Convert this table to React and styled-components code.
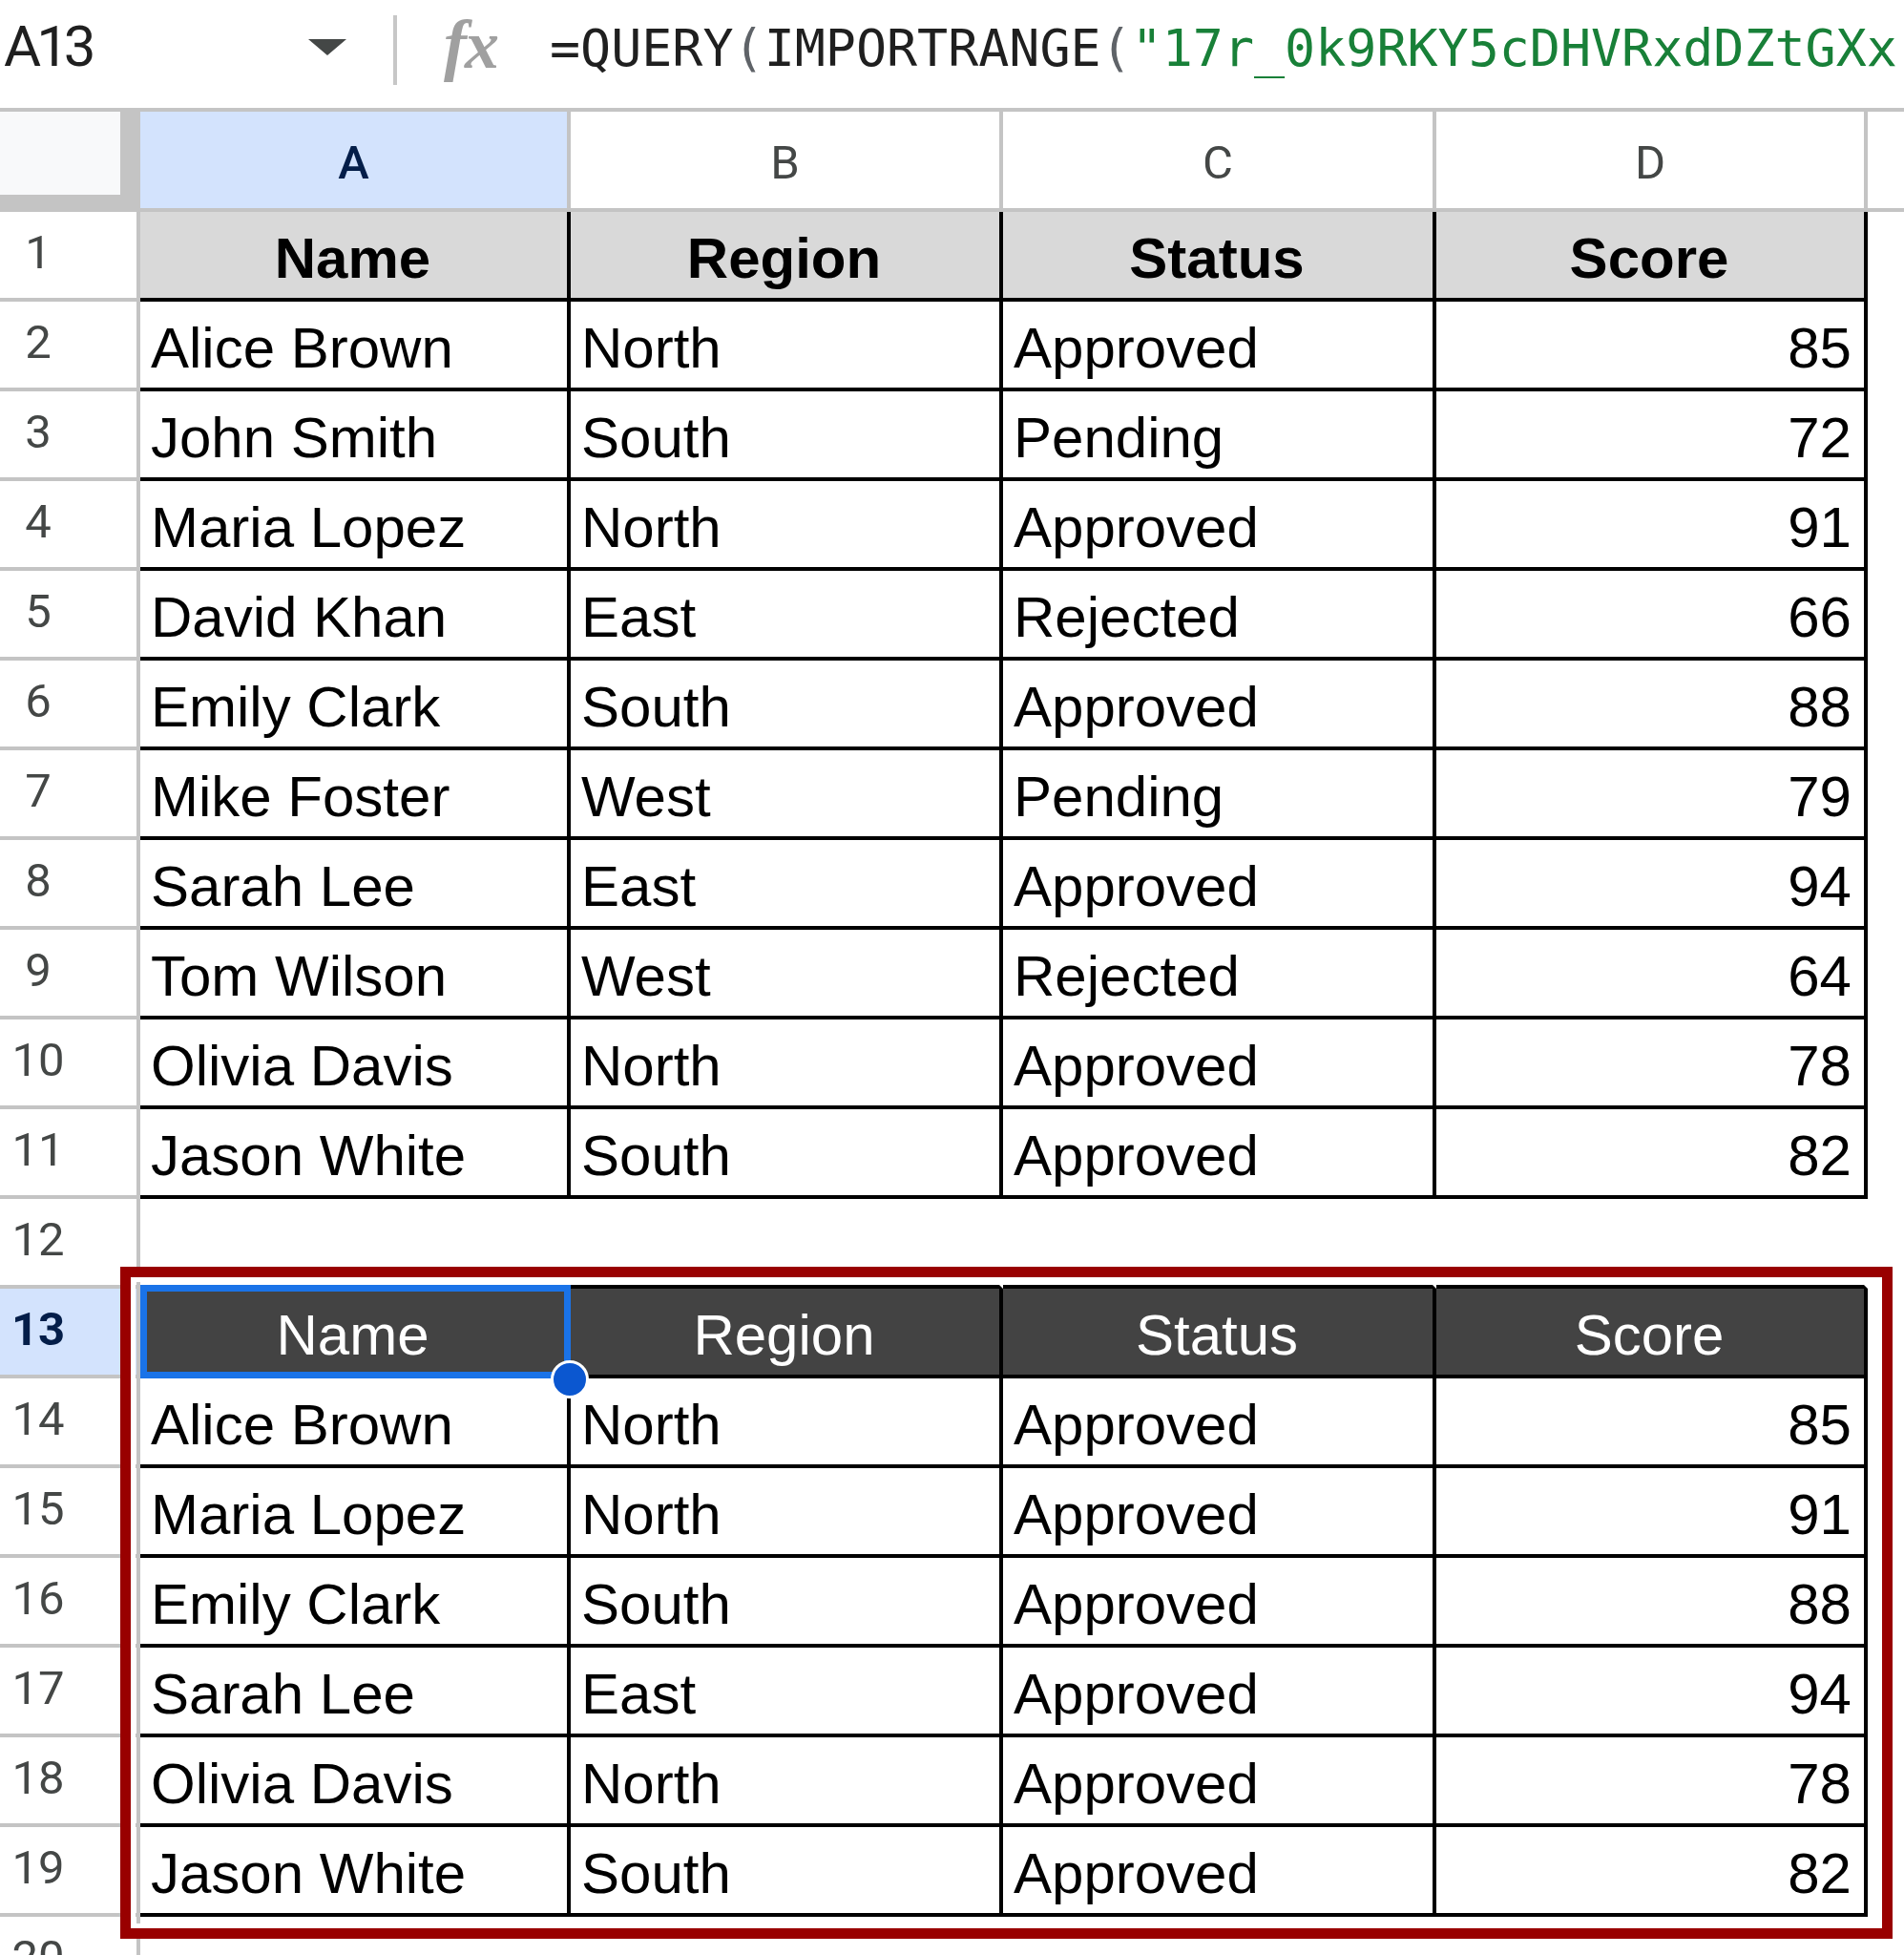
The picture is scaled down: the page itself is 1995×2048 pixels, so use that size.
import React from 'react';
import styled, { createGlobalStyle } from 'styled-components';

const GRID = '#c4c4c4';
const COLS = [451, 453, 454, 452];
const LETTERS = ['A', 'B', 'C', 'D'];

const GlobalStyle = createGlobalStyle`
  html, body { margin: 0; padding: 0; background: #fff; }
  body { font-family: "Liberation Sans", Arial, sans-serif; overflow: hidden; }
`;

const Page = styled.div`
  position: relative;
  width: 1995px;
  height: 2048px;
  overflow: hidden;
  background: #fff;
`;

/* ---------- formula bar ---------- */
const FormulaBar = styled.div`
  display: flex;
  align-items: flex-start;
  height: 113px;
  border-bottom: 4px solid ${GRID};
`;

const NameBox = styled.div`
  box-sizing: border-box;
  flex: none;
  width: 323px;
  padding-left: 4px;
  margin-top: 19px;
  font: 400 60px/60px Roboto, "Liberation Sans", sans-serif;
  letter-spacing: -5px;
  color: #1f1f1f;
`;

const Caret = styled.div`
  flex: none;
  width: 0;
  height: 0;
  margin-top: 41px;
  border-left: 20px solid transparent;
  border-right: 20px solid transparent;
  border-top: 17px solid #444746;
`;

const Divider = styled.div`
  flex: none;
  width: 4px;
  height: 73px;
  margin: 16px 0 0 49px;
  background: #c7c7c7;
`;

const FxLabel = styled.div`
  flex: none;
  width: 111px;
  margin: 11px 0 0 49px;
  font: italic 600 72px/72px "Liberation Serif", "Times New Roman", serif;
  color: #a0a0a0;
  letter-spacing: -2px;
`;

const FormulaText = styled.div`
  flex: 1 1 auto;
  min-width: 0;
  margin-top: 21px;
  font: 400 53.3px/60px "DejaVu Sans Mono", "Liberation Mono", monospace;
  white-space: nowrap;
  color: #1f1f1f;
`;

const Paren = styled.span`
  color: #5f6368;
`;

const Str = styled.span`
  color: #188038;
`;

/* ---------- grid ---------- */
const HeaderRow = styled.div`
  display: flex;
  height: 105px;
`;

const Corner = styled.div`
  flex: none;
  width: 147px;
  height: 105px;
  background: #c4c4c4;
`;

const CornerInner = styled.div`
  width: 126px;
  height: 87px;
  background: #f8f9fa;
`;

const ColHeader = styled.div`
  box-sizing: border-box;
  flex: none;
  width: ${(p) => p.$w}px;
  height: 105px;
  padding-top: 5px;
  border-right: 4px solid ${GRID};
  border-bottom: 4px solid ${GRID};
  background: ${(p) => (p.$active ? '#d3e3fd' : '#fff')};
  color: ${(p) => (p.$active ? '#041e49' : '#444746')};
  font: ${(p) => (p.$active ? 500 : 400)} 49px/49px Roboto, "Liberation Sans", sans-serif;
  display: flex;
  align-items: center;
  justify-content: center;
`;

const HeaderFill = styled.div`
  flex: 1;
  border-bottom: 4px solid ${GRID};
`;

const Row = styled.div`
  display: flex;
  height: 94px;
`;

const RowHeader = styled.div`
  box-sizing: border-box;
  flex: none;
  width: 147px;
  height: 94px;
  padding-bottom: 6px;
  border-right: 4px solid ${GRID};
  border-bottom: 4px solid ${GRID};
  background: ${(p) => (p.$active ? '#d3e3fd' : '#fff')};
  display: flex;
  align-items: center;
`;

const RowNum = styled.span`
  width: 80px;
  text-align: center;
  font: ${(p) => (p.$active ? 700 : 400)} 49px/49px Roboto, "Liberation Sans", sans-serif;
  color: ${(p) => (p.$active ? '#041e49' : '#444746')};
`;

const TONES = {
  plain: { bg: '#fff', fg: '#000' },
  light: { bg: '#d9d9d9', fg: '#000' },
  dark: { bg: '#434343', fg: '#fff' },
};

const JUSTIFY = { left: 'flex-start', center: 'center', right: 'flex-end' };

const Cell = styled.div`
  box-sizing: border-box;
  flex: none;
  width: ${(p) => p.$w}px;
  height: 94px;
  padding: 0 13px 11px 11px;
  border-right: 4px solid ${(p) => (p.$right ? '#000' : 'transparent')};
  border-bottom: 4px solid ${(p) => (p.$bottom ? '#000' : 'transparent')};
  background: ${(p) => TONES[p.$tone].bg};
  color: ${(p) => TONES[p.$tone].fg};
  font: ${(p) => (p.$bold ? 700 : 400)} 60px/60px "Liberation Sans", Arial, sans-serif;
  display: flex;
  align-items: flex-end;
  justify-content: ${(p) => JUSTIFY[p.$align]};
  white-space: nowrap;
  overflow: hidden;
`;

const RowFill = styled.div`
  flex: 1;
`;

/* ---------- overlays ---------- */
const Selection = styled.div`
  position: absolute;
  box-sizing: border-box;
  left: 147px;
  top: 1346px;
  width: 451px;
  height: 98px;
  border: 7px solid #1a73e8;
`;

const FillHandle = styled.div`
  position: absolute;
  box-sizing: border-box;
  left: 577px;
  top: 1425px;
  width: 40px;
  height: 40px;
  border-radius: 50%;
  border: 3px solid #fff;
  background: #0b57d0;
`;

const Highlight = styled.div`
  position: absolute;
  box-sizing: border-box;
  left: 126px;
  top: 1327px;
  width: 1857px;
  height: 704px;
  border: 11px solid #990000;
  box-shadow: inset 0 0 0 5px #fff;
`;

/* ---------- data ---------- */
const HEAD = ['Name', 'Region', 'Status', 'Score'];

const SOURCE = [
  ['Alice Brown', 'North', 'Approved', 85],
  ['John Smith', 'South', 'Pending', 72],
  ['Maria Lopez', 'North', 'Approved', 91],
  ['David Khan', 'East', 'Rejected', 66],
  ['Emily Clark', 'South', 'Approved', 88],
  ['Mike Foster', 'West', 'Pending', 79],
  ['Sarah Lee', 'East', 'Approved', 94],
  ['Tom Wilson', 'West', 'Rejected', 64],
  ['Olivia Davis', 'North', 'Approved', 78],
  ['Jason White', 'South', 'Approved', 82],
];

const RESULT = SOURCE.filter((r) => r[2] === 'Approved');

const ROWS = [
  { kind: 'head', tone: 'light', bold: true, cells: HEAD },
  ...SOURCE.map((cells) => ({ kind: 'data', cells })),
  { kind: 'gap' },
  { kind: 'head', tone: 'dark', bold: false, cells: HEAD },
  ...RESULT.map((cells) => ({ kind: 'data', cells })),
  { kind: 'empty' },
];

function SheetRow({ row, n }) {
  const active = n === 13;
  return (
    <Row>
      <RowHeader $active={active}>
        <RowNum $active={active}>{n}</RowNum>
      </RowHeader>
      {COLS.map((w, i) => {
        if (row.kind === 'gap' || row.kind === 'empty') {
          return (
            <Cell key={i} $w={w} $tone="plain" $align="left" $bottom={row.kind === 'gap'} />
          );
        }
        const isHead = row.kind === 'head';
        const align = isHead ? 'center' : i === 3 ? 'right' : 'left';
        return (
          <Cell
            key={i}
            $w={w}
            $tone={isHead ? row.tone : 'plain'}
            $bold={isHead && row.bold}
            $align={align}
            $right
            $bottom
          >
            {row.cells[i]}
          </Cell>
        );
      })}
      <RowFill />
    </Row>
  );
}

export default function App() {
  return (
    <Page>
      <GlobalStyle />
      <FormulaBar>
        <NameBox>A13</NameBox>
        <Caret />
        <Divider />
        <FxLabel>fx</FxLabel>
        <FormulaText>
          =QUERY<Paren>(</Paren>IMPORTRANGE<Paren>(</Paren>
          <Str>"17r_0k9RKY5cDHVRxdDZtGXx</Str>
        </FormulaText>
      </FormulaBar>

      <HeaderRow>
        <Corner>
          <CornerInner />
        </Corner>
        {COLS.map((w, i) => (
          <ColHeader key={i} $w={w} $active={i === 0}>
            {LETTERS[i]}
          </ColHeader>
        ))}
        <HeaderFill />
      </HeaderRow>

      {ROWS.map((row, idx) => (
        <SheetRow key={idx} row={row} n={idx + 1} />
      ))}

      <Highlight />
      <Selection />
      <FillHandle />
    </Page>
  );
}
